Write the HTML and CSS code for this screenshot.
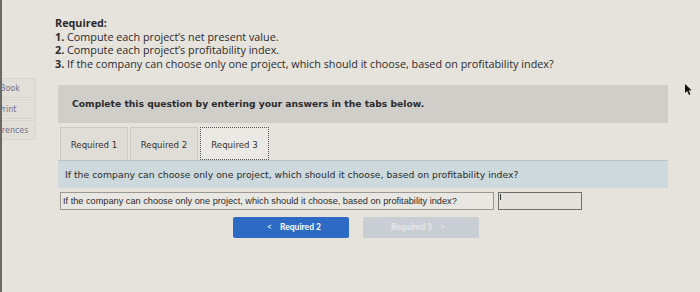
FILE: index.html
```html
<!DOCTYPE html>
<html>
<head>
<meta charset="utf-8">
<link rel="stylesheet" href="styles.css">
</head>
<body>
<div class="page">
  <div class="edge"></div>
  <nav class="sidebar">
    <div class="side-item"><span class="s-book">eBook</span></div>
    <div class="side-item"><span class="s-print">Print</span></div>
    <div class="side-item"><span class="s-ref">References</span></div>
  </nav>
  <main class="main">
    <section class="required">
      <div class="req-title">Required:</div>
      <div><b>1.</b> Compute each project’s net present value.</div>
      <div><b>2.</b> Compute each project’s profitability index.</div>
      <div><b>3.</b> If the company can choose only one project, which should it choose, based on profitability index?</div>
    </section>
    <div class="banner">Complete this question by entering your answers in the tabs below.</div>
    <div class="tabs">
      <div class="tab">Required 1</div>
      <div class="tab">Required 2</div>
      <div class="tab active">Required 3</div>
    </div>
    <div class="question">If the company can choose only one project, which should it choose, based on profitability index?</div>
    <div class="answer-row">
      <div class="answer-label">If the company can choose only one project, which should it choose, based on profitability index?</div>
      <div class="answer-input"><span class="caret"></span></div>
    </div>
    <div class="nav-buttons">
      <div class="btn btn-prev"><span class="chev">&lt;</span> Required 2</div>
      <div class="btn btn-next">Required 3 <span class="chev">&gt;</span></div>
    </div>
  </main>
  <svg class="cursor" width="8" height="12" viewBox="0 0 8 12"><path d="M0 0 L0 9 L2.2 7 L4 11 L5.4 10.3 L3.7 6.5 L6.6 6.3 Z" fill="#111"/></svg>
</div>
</body>
</html>
```
FILE: styles.css
```css
html, body {
  margin: 0;
  padding: 0;
}
body {
  width: 700px;
  height: 292px;
  overflow: hidden;
  background: #e6e3dc;
}
.page {
  position: relative;
  display: flex;
  height: 292px;
}
.edge {
  width: 2px;
  background: #6b6966;
  flex: none;
}
.sidebar {
  width: 34px;
  flex: none;
  padding-top: 78px;
  display: flex;
  flex-direction: column;
}
.side-item {
  height: 18px;
  border: 1px solid #d8d5ce;
  border-left: none;
  margin-bottom: 1px;
  background: #e2dfd8;
  overflow: hidden;
  white-space: nowrap;
  font-family: "DejaVu Sans", sans-serif;
  font-size: 8px;
  line-height: 19px;
  color: #726f88;
}
.s-book { display: inline-block; margin-left: -7px; }
.s-print { display: inline-block; margin-left: -4px; }
.s-ref { display: inline-block; margin-left: -18px; }
.main {
  margin-left: 19px;
  width: 613px;
  flex: none;
}
.required {
  padding-top: 16px;
  font-family: "Open Sans", sans-serif;
  font-size: 10.8px;
  line-height: 13.7px;
  color: #2b2a2c;
}
.required b, .req-title {
  font-weight: 700;
}
.banner {
  margin-top: 14px;
  margin-left: 3px;
  height: 38px;
  background: #cfcec9;
  font-family: "DejaVu Sans", sans-serif;
  font-weight: bold;
  font-size: 9.2px;
  line-height: 38px;
  padding-left: 14px;
  color: #2b2a2c;
}
.tabs {
  display: flex;
  margin-top: 4px;
  margin-left: 5px;
  height: 33px;
  gap: 2px;
}
.tab {
  width: 66px;
  border: 1px solid #cdcac4;
  border-bottom: none;
  background: #e0ddd6;
  font-family: "DejaVu Sans", sans-serif;
  font-size: 8.6px;
  color: #333;
  text-align: center;
  line-height: 34px;
}
.tab.active {
  width: 67px;
  background: #ebe9e4;
  border: 1px dotted #555;
}
.question {
  margin-left: 3px;
  height: 27px;
  background: #cdd9dc;
  border-top: 1px solid #b3c4ca;
  font-family: "DejaVu Sans", sans-serif;
  font-size: 9.3px;
  line-height: 27px;
  padding-left: 7px;
  color: #2b2a2c;
}
.answer-row {
  display: flex;
  margin-top: 4px;
  margin-left: 5px;
  gap: 4px;
}
.answer-label {
  width: 430px;
  height: 16px;
  border: 1px solid #9c9994;
  background: #e9e7e1;
  font-family: "Liberation Sans", sans-serif;
  font-size: 9.2px;
  line-height: 16px;
  padding-left: 2px;
  color: #2b2a2c;
  white-space: nowrap;
}
.answer-input {
  position: relative;
  width: 82px;
  height: 16px;
  border: 1px solid #6f6d6a;
  background: #e4e2dc;
}
.caret {
  position: absolute;
  left: 1px;
  top: 1px;
  width: 1px;
  height: 6px;
  background: #333;
}
.nav-buttons {
  display: flex;
  gap: 14px;
  margin-top: 7px;
  margin-left: 178px;
}
.btn {
  width: 116px;
  height: 21px;
  border-radius: 2px;
  font-family: "Lato", sans-serif;
  font-weight: bold;
  font-size: 8.5px;
  line-height: 21px;
  text-align: center;
}
.btn-prev {
  background: #2c6ac4;
  color: #fff;
}
.btn-next {
  background: #c9ced4;
  color: #e6e9ec;
}
.chev {
  font-weight: normal;
  margin: 0 6px;
}
.cursor {
  position: absolute;
  left: 685px;
  top: 84px;
}
```
